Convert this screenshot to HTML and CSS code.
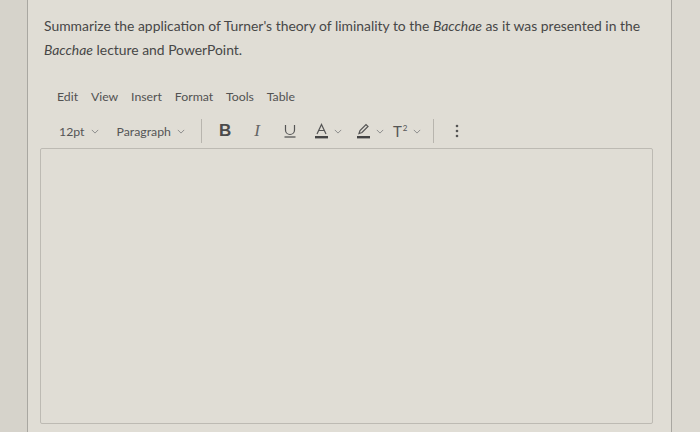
FILE: index.html
```html
<!DOCTYPE html>
<html>
<head>
<meta charset="utf-8">
<link rel="stylesheet" href="styles.css">
</head>
<body>
<div class="page">
  <div class="gutter"></div>
  <div class="panel">
    <p class="question">Summarize the application of Turner's theory of liminality to the <em>Bacchae</em> as it was presented in the <em>Bacchae</em> lecture and PowerPoint.</p>
    <div class="menubar">
      <span>Edit</span><span>View</span><span>Insert</span><span>Format</span><span>Tools</span><span>Table</span>
    </div>
    <div class="toolbar">
      <span class="drop">12pt <svg class="chev" viewBox="0 0 10 6"><path d="M1 1l4 4 4-4"/></svg></span>
      <span class="drop para">Paragraph <svg class="chev" viewBox="0 0 10 6"><path d="M1 1l4 4 4-4"/></svg></span>
      <span class="sep"></span>
      <span class="btn bold">B</span>
      <span class="btn ital">I</span>
      <span class="btn under"><svg width="12" height="16" viewBox="0 0 12 16"><path d="M1.5 2v5a4.5 4.5 0 0 0 9 0V2" fill="none" stroke="#555" stroke-width="1.2"/><path d="M0.5 14h11" stroke="#555" stroke-width="1.3"/></svg></span>
      <span class="btn grp color"><svg width="13" height="16" viewBox="0 0 13 16"><path d="M2 11L6.5 1.5 11 11M3.7 7.5h5.6" fill="none" stroke="#555" stroke-width="1.2"/><rect x="0" y="13" width="13" height="2.4" fill="#444"/></svg><svg class="chev" viewBox="0 0 10 6"><path d="M1 1l4 4 4-4"/></svg></span>
      <span class="btn grp hl"><svg width="13" height="16" viewBox="0 0 13 16"><path d="M2 10.5l1-3L9 1.5l2 2-6 6z" fill="none" stroke="#555" stroke-width="1.2"/><rect x="0" y="13" width="13" height="2.4" fill="#444"/></svg><svg class="chev" viewBox="0 0 10 6"><path d="M1 1l4 4 4-4"/></svg></span>
      <span class="btn grp sup"><span class="tsup">T<sup>2</sup></span><svg class="chev" viewBox="0 0 10 6"><path d="M1 1l4 4 4-4"/></svg></span>
      <span class="sep sep2"></span>
      <span class="btn more"><svg width="4" height="14" viewBox="0 0 4 14"><circle cx="2" cy="2" r="1.3" fill="#555"/><circle cx="2" cy="7" r="1.3" fill="#555"/><circle cx="2" cy="12" r="1.3" fill="#555"/></svg></span>
    </div>
    <div class="editor"></div>
  </div>
  <div class="gutter right"></div>
</div>
</body>
</html>
```
FILE: styles.css
```css
html, body { margin: 0; padding: 0; }
body {
  width: 700px; height: 432px; overflow: hidden;
  background: #d9d6ce;
  font-family: Lato, "Open Sans", sans-serif;
  color: #4b4b4b;
}
.page { display: flex; height: 432px; }
.gutter { width: 27px; background: #d6d3cb; border-right: 1px solid #a9a7a1; }
.gutter.right { width: 28px; border-right: none; border-left: 1px solid #a9a7a1; background: #dcd9d1; }
.panel {
  flex: 1;
  background: #e0ddd5;
  padding: 0 18px 0 12px;
  display: flex; flex-direction: column;
}
.question {
  margin: 14px 0 0 4px;
  font-size: 13.9px;
  line-height: 24px;
  color: #474747;
}
.question em { font-style: italic; }
.menubar {
  margin: 27px 0 0 17px;
  display: flex; gap: 12.8px;
  font-size: 12.3px; color: #525252;
  line-height: 16px;
}
.toolbar {
  margin: 13px 0 0 19px;
  display: flex; align-items: center;
  height: 26px;
  font-size: 12.3px; color: #555;
}
.drop { display: flex; align-items: center; }
.chev { width: 8px; height: 5px; margin-left: 6px; fill: none; stroke: #8a8a8a; stroke-width: 1.2; }
.para { margin-left: 18px; }
.sep { width: 1px; height: 24px; background: #b8b5ae; margin-left: 16px; }
.btn { display: flex; align-items: center; }
.bold { margin-left: 17px; font-size: 17px; font-weight: 600; font-family: "Liberation Sans", sans-serif; color: #4a4a4a; }
.ital { margin-left: 23px; font-family: "Liberation Serif", serif; font-style: italic; font-size: 17px; color: #666; }
.under { margin-left: 24px; }
.color { margin-left: 19px; }
.hl { margin-left: 15px; }
.sup { margin-left: 9px; font-size: 15px; color: #555; }
.tsup { display: inline-block; line-height: 16px; }
.tsup sup { font-size: 8px; vertical-align: 6px; line-height: 0; margin-left: 1px; }
.sep2 { margin-left: 12px; }
.more { margin-left: 21px; }
.editor {
  margin: 4px 0 0 0;
  height: 274px;
  border: 1px solid #bdbab3;
  border-radius: 2px;
  background: #e0ddd5;
}
```
